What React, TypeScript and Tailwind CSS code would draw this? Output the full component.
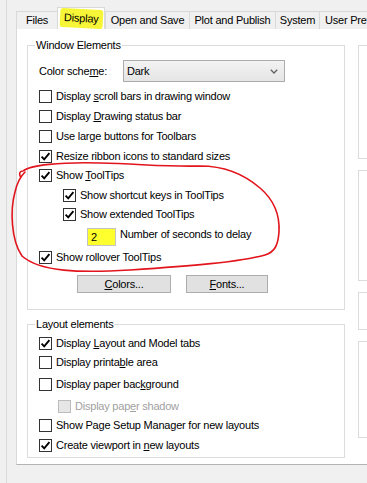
import React from "react";

function Check({ checked = false, disabled = false }: { checked?: boolean; disabled?: boolean }) {
  return (
    <span
      className={
        disabled
          ? "w-[13px] h-[13px] border border-[#bcbcbc] bg-[#e6e6e6] shrink-0 flex items-center justify-center"
          : "w-[13px] h-[13px] border border-[#333333] bg-white shrink-0 flex items-center justify-center"
      }
    >
      {checked && (
        <svg width="11" height="11" viewBox="0 0 11 11">
          <path d="M1.6 5.6 L4.2 8.3 L9.4 2.2" fill="none" stroke="#000" strokeWidth="1.9" />
        </svg>
      )}
    </span>
  );
}

function U({ children }: { children: React.ReactNode }) {
  return <span className="underline underline-offset-[1px]">{children}</span>;
}

function Row({
  cls,
  checked,
  disabled,
  children,
}: {
  cls: string;
  checked?: boolean;
  disabled?: boolean;
  children: React.ReactNode;
}) {
  return (
    <div className={"flex items-center gap-[4px] " + cls}>
      <Check checked={checked} disabled={disabled} />
      <span className={disabled ? "text-[#a0a0a0] whitespace-nowrap" : "whitespace-nowrap"}>{children}</span>
    </div>
  );
}

function Tab({ w, children }: { w: string; children: React.ReactNode }) {
  return (
    <div
      className={
        "h-[18px] border-t border-l border-[#d9d9d9] bg-[#f0f0f0] flex items-center justify-center whitespace-nowrap shrink-0 " +
        w
      }
    >
      {children}
    </div>
  );
}

export default function App() {
  return (
    <div className="w-[367px] h-[483px] bg-[#f0f0f0] overflow-hidden relative font-['Liberation_Sans',Arial,sans-serif] text-[11px] leading-[13px] tracking-[-0.22px] text-black">
      <div className="h-full ml-[6px] border-l border-[#dcdcdc] pl-[9px] pt-[7px]">
        {/* Tabs */}
        <div className="flex items-end h-[22px] relative z-10">
          <Tab w="w-[41px]">Files</Tab>
          <div className="w-[48px] shrink-0 h-[22px] border-t border-l border-r border-[#d9d9d9] bg-white flex items-start justify-center pt-[1px]">
            <span className="bg-[#f7f538] px-[4px] py-[3px] rounded-[3px] rotate-[3deg] leading-[13px]">Display</span>
          </div>
          <Tab w="w-[84px]">Open and Save</Tab>
          <Tab w="w-[86px]">Plot and Publish</Tab>
          <Tab w="w-[44px]">System</Tab>
          <div className="w-[100px] shrink-0 h-[18px] border-t border-l border-[#d9d9d9] bg-[#f0f0f0] flex items-center pl-[5px] whitespace-nowrap">
            User Preferences
          </div>
        </div>

        {/* Panel */}
        <div className="-mt-[1px] w-[400px] h-[437px] bg-white border border-[#d9d9d9] border-b-[#b4b4b4] flex gap-[13px] pl-[10px] pt-[16px]">
          {/* Left column */}
          <div className="w-[318px] shrink-0 flex flex-col">
            {/* Window Elements */}
            <div className="relative h-[265px] border border-[#dcdcdc] pl-[11px] pt-[14px]">
              <span className="absolute left-[7px] -top-[7px] bg-white px-[1px] whitespace-nowrap">Window Elements</span>
              <div className="flex items-center h-[22px]">
                <span className="w-[84px] shrink-0 whitespace-nowrap">
                  Color sche<U>m</U>e:
                </span>
                <div className="w-[162px] h-[22px] border border-[#acacac] bg-gradient-to-b from-[#f3f3f3] to-[#e5e5e5] flex items-center justify-between pl-[3px] pr-[6px]">
                  <span>Dark</span>
                  <svg width="8" height="5" viewBox="0 0 8 5">
                    <path d="M0.8 0.8 L4 4 L7.2 0.8" fill="none" stroke="#606060" strokeWidth="1.3" />
                  </svg>
                </div>
              </div>
              <div className="mt-[4px] flex flex-col">
                <Row cls="h-[20px]">
                  Display <U>s</U>croll bars in drawing window
                </Row>
                <Row cls="h-[20px]">
                  Display <U>D</U>rawing status bar
                </Row>
                <Row cls="h-[20px]">Use large buttons for Toolbars</Row>
                <Row cls="h-[20px]" checked>
                  Resize ribbon icons to standard sizes
                </Row>
                <Row cls="h-[19px]" checked>
                  Show <U>T</U>oolTips
                </Row>
                <Row cls="h-[20px] pl-[24px]" checked>
                  Show shortcut keys in ToolTips
                </Row>
                <Row cls="h-[19px] pl-[24px]" checked>
                  Show extended ToolTips
                </Row>
                <div className="h-[24px] flex items-start pl-[48px]">
                  <div className="mt-[4px] w-[29px] h-[18px] border border-[#c4c4c4] bg-[#ffff2e] pl-[3px] leading-[16px]">
                    2
                  </div>
                  <span className="ml-[4px] mt-[4px] whitespace-nowrap">Number of seconds to delay</span>
                </div>
                <Row cls="h-[18px]" checked>
                  Show rollover ToolTips
                </Row>
              </div>
              <div className="mt-[9px] pl-[38px] flex gap-[15px]">
                <div className="w-[94px] h-[18px] border border-[#adadad] bg-[#e1e1e1] flex items-center justify-center">
                  <span>
                    <U>C</U>olors...
                  </span>
                </div>
                <div className="w-[82px] h-[18px] border border-[#adadad] bg-[#e1e1e1] flex items-center justify-center">
                  <span>
                    <U>F</U>onts...
                  </span>
                </div>
              </div>
            </div>

            {/* Layout elements */}
            <div className="relative mt-[14px] h-[134px] border border-[#dcdcdc] pl-[11px] pt-[8px] flex flex-col">
              <span className="absolute left-[7px] -top-[7px] bg-white px-[1px] whitespace-nowrap">Layout elements</span>
              <Row cls="h-[20px]" checked>
                Display <U>L</U>ayout and Model tabs
              </Row>
              <Row cls="h-[19px]">
                Display printa<U>b</U>le area
              </Row>
              <Row cls="h-[24px]">
                Display paper bac<U>k</U>ground
              </Row>
              <Row cls="h-[20px] pl-[19px]" disabled>
                Display pap<U>e</U>r shadow
              </Row>
              <Row cls="h-[19px]">Show Page Setup Manager for new layouts</Row>
              <Row cls="h-[21px]" checked>
                Create viewport in <U>n</U>ew layouts
              </Row>
            </div>
          </div>

          {/* Right column */}
          <div className="w-[40px] shrink-0 flex flex-col gap-[11px]">
            <div className="h-[114px] border border-[#dcdcdc]" />
            <div className="h-[111px] border border-[#dcdcdc]" />
            <div className="h-[38px] border border-[#dcdcdc]" />
            <div className="h-[97px] border border-[#dcdcdc]" />
          </div>
        </div>
      </div>

      {/* Red freehand annotation */}
      <svg className="absolute left-0 top-0 pointer-events-none" width="367" height="483" viewBox="0 0 367 483">
        <path
          d="M20 176 C19 173 20 171 23 171 M23 171 C30 165 60 162 100 163 C140 164 170 167 200 166 C225 166 245 175 260 188 C274 200 280 215 279 232 C278 245 275 252 265 255 C240 262 190 266 130 270 C80 273 40 272 22 256 C11 240 10 210 15 192 C17 183 20 177 25 172"
          fill="none"
          stroke="#e2141c"
          strokeWidth="1.6"
          strokeLinecap="round"
        />
      </svg>
    </div>
  );
}
